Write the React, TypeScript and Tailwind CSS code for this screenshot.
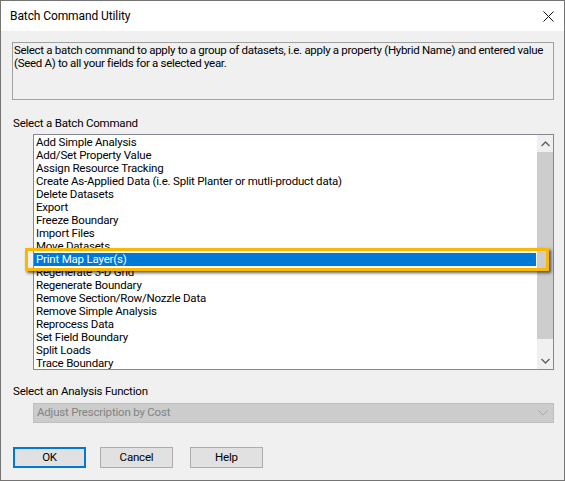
import React from "react";

const items = [
  "Add Simple Analysis",
  "Add/Set Property Value",
  "Assign Resource Tracking",
  "Create As-Applied Data (i.e. Split Planter or mutli-product data)",
  "Delete Datasets",
  "Export",
  "Freeze Boundary",
  "Import Files",
  "Move Datasets",
  "Print Map Layer(s)",
  "Regenerate 3-D Grid",
  "Regenerate Boundary",
  "Remove Section/Row/Nozzle Data",
  "Remove Simple Analysis",
  "Reprocess Data",
  "Set Field Boundary",
  "Split Loads",
  "Trace Boundary",
];

const font = { fontFamily: "Roboto, 'Noto Sans', sans-serif" };

export default function App() {
  return (
    <div
      className="w-[565px] h-[481px] bg-[#f0f0f0] border border-[#747474] flex flex-col text-[11.5px] tracking-[-0.2px] text-black overflow-hidden"
      style={font}
    >
      {/* Title bar */}
      <div className="h-[30px] bg-white flex items-center justify-between pl-[9px] pr-[9px] shrink-0 text-[12px] tracking-[-0.1px]">
        <span>Batch Command Utility</span>
        <svg width="11" height="11" viewBox="0 0 11 11" className="mr-[1px]">
          <path d="M0.5 0.5 L10.5 10.5 M10.5 0.5 L0.5 10.5" stroke="#111" strokeWidth="1" />
        </svg>
      </div>

      <div className="flex flex-col pl-[11px] pr-[10px]">
        {/* Description */}
        <div className="mt-[11px] h-[58px] border border-[#a0a0a0] pl-[1px] pt-[1px] leading-[13px] tracking-[-0.3px]">
          Select a batch command to apply to a group of datasets, i.e. apply a property (Hybrid Name) and entered value
          (Seed A) to all your fields for a selected year.
        </div>

        <div className="mt-[16px] leading-[15px] pl-[1px]">Select a Batch Command</div>

        {/* List */}
        <div className="relative ml-[21px] mt-[3px] h-[236px] border border-[#828790] bg-white flex">
          <div className="flex-1 overflow-hidden pt-[1px]">
            {items.map((it) => (
              <div
                key={it}
                className={
                  it === "Print Map Layer(s)"
                    ? "h-[13px] leading-[13px] pl-[2px] bg-[#0078d7] text-white whitespace-nowrap"
                    : "h-[13px] leading-[13px] pl-[2px] whitespace-nowrap"
                }
              >
                {it}
              </div>
            ))}
          </div>
          {/* Scrollbar */}
          <div className="w-[17px] flex flex-col bg-[#f0f0f0] border-l border-white">
            <div className="h-[17px] flex items-center justify-center">
              <svg width="9" height="6" viewBox="0 0 9 6">
                <path d="M0.5 5 L4.5 1 L8.5 5" stroke="#606060" strokeWidth="1.4" fill="none" />
              </svg>
            </div>
            <div className="h-[187px] bg-[#cdcdcd]" />
            <div className="flex-1" />
            <div className="h-[17px] flex items-center justify-center">
              <svg width="9" height="6" viewBox="0 0 9 6">
                <path d="M0.5 1 L4.5 5 L8.5 1" stroke="#606060" strokeWidth="1.4" fill="none" />
              </svg>
            </div>
          </div>
          {/* Highlight callout */}
          <div className="absolute left-[-9px] top-[113px] w-[524px] h-[23px] border-[3px] border-[#fbb800] shadow-[2px_2px_3px_rgba(0,0,0,0.65)]" />
        </div>

        <div className="mt-[14px] leading-[15px] pl-[1px]">Select an Analysis Function</div>

        {/* Combo */}
        <div className="ml-[21px] mt-[4px] h-[20px] bg-[#cccccc] border border-[#bfbfbf] flex items-center justify-between pl-[3px] pr-[5px] text-[#838383]">
          <span>Adjust Prescription by Cost</span>
          <svg width="10" height="6" viewBox="0 0 10 6">
            <path d="M0.5 0.5 L5 5 L9.5 0.5" stroke="#a8a8a8" strokeWidth="1" fill="none" />
          </svg>
        </div>

        {/* Buttons */}
        <div className="mt-[24px] flex pl-[1px]">
          <button className="w-[73px] h-[21px] bg-[#e1e1e1] border-2 border-[#0078d7] flex items-center justify-center">
            OK
          </button>
          <button className="ml-[14px] w-[73px] h-[21px] bg-[#e1e1e1] border border-[#adadad] flex items-center justify-center">
            Cancel
          </button>
          <button className="ml-[17px] w-[73px] h-[21px] bg-[#e1e1e1] border border-[#adadad] flex items-center justify-center">
            Help
          </button>
        </div>
      </div>
    </div>
  );
}
